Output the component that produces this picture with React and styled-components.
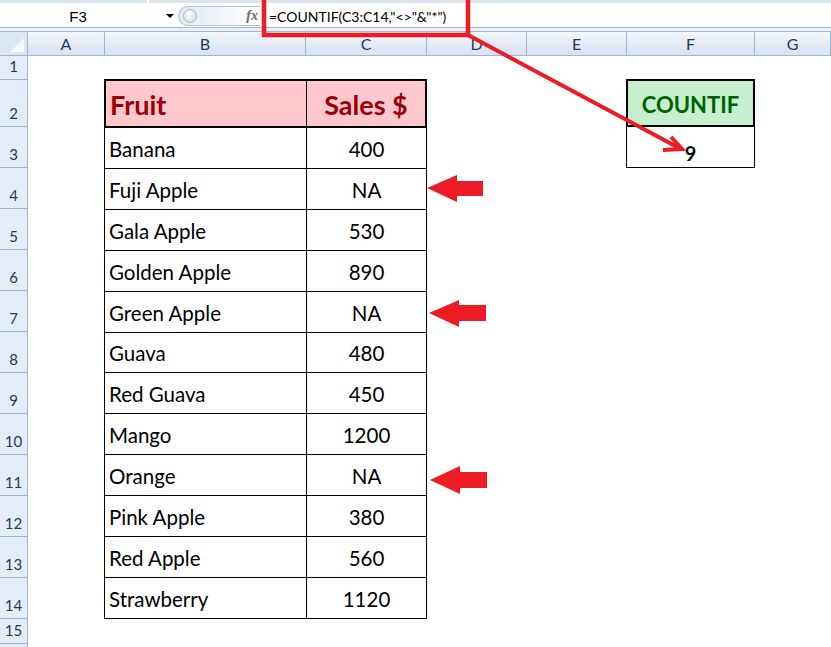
import React from "react";
import styled, { createGlobalStyle } from "styled-components";

const GlobalStyle = createGlobalStyle`
  html, body {
    margin: 0;
    padding: 0;
    background: #ffffff;
    overflow: hidden;
  }
  * {
    box-sizing: border-box;
  }
`;

const columns = ["A", "B", "C", "D", "E", "F", "G"];

const fruits = [
  ["Banana", "400"],
  ["Fuji Apple", "NA"],
  ["Gala Apple", "530"],
  ["Golden Apple", "890"],
  ["Green Apple", "NA"],
  ["Guava", "480"],
  ["Red Guava", "450"],
  ["Mango", "1200"],
  ["Orange", "NA"],
  ["Pink Apple", "380"],
  ["Red Apple", "560"],
  ["Strawberry", "1120"],
];

// row 16 is only a sliver at the bottom edge, so it gets no label
const rowLabels = Array.from({ length: 16 }, (_, i) => (i < 15 ? i + 1 : ""));

export default function App() {
  return (
    <Page>
      <GlobalStyle />
      <TopStrip />
      <FormulaBar>
        <NameBox>
          <span>F3</span>
          <DropArrow />
        </NameBox>
        <Splitter>
          <Knob />
          <Fx>fx</Fx>
        </Splitter>
        <FormulaText>=COUNTIF(C3:C14,"&lt;&gt;"&amp;"*")</FormulaText>
      </FormulaBar>
      <BarGap />

      <Sheet>
        <Corner>
          <CornerTriangle />
        </Corner>
        {columns.map((c) => (
          <ColHeader key={c}>{c}</ColHeader>
        ))}

        {rowLabels.map((n, i) => (
          <RowHeader key={i} style={{ gridRow: i + 2 }}>
            {n}
          </RowHeader>
        ))}

        <DataTable>
          <HeadRow $bg="#ffc7ce" $color="#9c0006">
            <HeadCell $align="left">Fruit</HeadCell>
            <HeadCell $align="center">Sales $</HeadCell>
          </HeadRow>
          {fruits.map(([name, sales]) => (
            <BodyRow key={name}>
              <Cell $align="left">{name}</Cell>
              <Cell $align="center">{sales}</Cell>
            </BodyRow>
          ))}
        </DataTable>

        <ResultBox>
          <ResultHead>COUNTIF</ResultHead>
          <ResultValue>9</ResultValue>
        </ResultBox>
      </Sheet>

      <Overlay width="831" height="647" viewBox="0 0 831 647">
        <rect
          x="264"
          y="-4"
          width="204"
          height="39"
          fill="none"
          stroke="#ed1c24"
          strokeWidth="4.5"
        />
        <line x1="468" y1="35" x2="681" y2="149" stroke="#ed1c24" strokeWidth="4" />
        <polyline
          points="671,137 682,149 663,150"
          fill="none"
          stroke="#ed1c24"
          strokeWidth="4"
          strokeLinejoin="miter"
        />
        <polygon
          points="427,188 457,175 457,181 483,181 483,196 457,196 457,202"
          fill="#ed1c24"
        />
        <polygon
          points="429,313 459,300 459,305 486,305 486,321 459,321 459,327"
          fill="#ed1c24"
        />
        <polygon
          points="430,480 460,466 460,472 487,472 487,488 460,488 460,494"
          fill="#ed1c24"
        />
      </Overlay>
    </Page>
  );
}

const Page = styled.div`
  position: relative;
  width: 831px;
  height: 647px;
  overflow: hidden;
  background: #ffffff;
`;

const TopStrip = styled.div`
  height: 3px;
  background: linear-gradient(to right, #dbe5f2 0 147px, #ffffff 147px 149px, #dbe5f2 149px);
`;

const FormulaBar = styled.div`
  height: 25px;
  display: flex;
  align-items: center;
  padding-top: 2px;
  background: #ffffff;
  border-bottom: 1px solid #a7b9d0;
`;

const NameBox = styled.div`
  width: 178px;
  height: 100%;
  display: flex;
  align-items: center;
  font-family: "Liberation Sans", Arial, sans-serif;
  font-size: 15px;
  color: #000;

  span {
    width: 156px;
    text-align: center;
  }
`;

const DropArrow = styled.div`
  width: 0;
  height: 0;
  margin-left: 10px;
  border-left: 4px solid transparent;
  border-right: 4px solid transparent;
  border-top: 4px solid #000;
`;

const Splitter = styled.div`
  width: 82px;
  height: 20px;
  display: flex;
  align-items: center;
  justify-content: space-between;
  padding: 0 2px 0 4px;
  border: 1px solid #b3c3d8;
  border-right: none;
  border-radius: 10px 0 0 10px;
  background: linear-gradient(to right, #e2e9f3, #f4f7fb 60%, #ffffff);
`;

const Knob = styled.div`
  width: 14px;
  height: 14px;
  border-radius: 50%;
  border: 1px solid #a9b8cc;
  background: radial-gradient(circle at 40% 35%, #ffffff, #c9d3e0);
`;

const Fx = styled.span`
  font-family: "Liberation Serif", "Times New Roman", serif;
  font-style: italic;
  font-weight: bold;
  font-size: 14px;
  color: #6b6b6b;
`;

const FormulaText = styled.div`
  margin-left: 9px;
  font-family: Lato, "Liberation Sans", sans-serif;
  font-size: 14px;
  color: #000;
`;

const BarGap = styled.div`
  height: 4px;
  background: #e7eef7;
  border-bottom: 1px solid #9eb6ce;
`;

const Sheet = styled.div`
  display: grid;
  grid-template-columns: 28px 77px 201px 121px 100px 100px 128px 1fr;
  grid-template-rows: 24px 24px 47px repeat(12, 41px) 25px 24px;
`;

const Corner = styled.div`
  grid-row: 1;
  grid-column: 1;
  position: relative;
  background: #dce6f3;
  border-right: 1px solid #9eb6ce;
  border-bottom: 1px solid #9eb6ce;
`;

const CornerTriangle = styled.div`
  position: absolute;
  right: 3px;
  bottom: 3px;
  width: 0;
  height: 0;
  border-left: 14px solid transparent;
  border-bottom: 14px solid #f4f7fb;
`;

const ColHeader = styled.div`
  grid-row: 1;
  display: flex;
  align-items: center;
  justify-content: center;
  background: linear-gradient(#f5f8fc, #e3eaf4 55%, #d9e3ef);
  border-right: 1px solid #9eb6ce;
  border-bottom: 1px solid #9eb6ce;
  font-family: Lato, "Liberation Sans", sans-serif;
  font-size: 16px;
  color: #1f3a5c;
`;

const RowHeader = styled.div`
  grid-column: 1;
  display: flex;
  align-items: flex-end;
  justify-content: center;
  padding-bottom: 4px;
  background: #e4ecf7;
  border-right: 1px solid #9eb6ce;
  border-bottom: 1px solid #9eb6ce;
  font-family: Lato, "Liberation Sans", sans-serif;
  font-size: 15px;
  color: #1f3a5c;
`;

const DataTable = styled.div`
  grid-column: 3 / 5;
  grid-row: 3 / 16;
  margin: -1px 0 0 -1px;
  display: flex;
  flex-direction: column;
  font-family: Lato, "Liberation Sans", sans-serif;
`;

const HeadRow = styled.div`
  display: grid;
  grid-template-columns: 201px 1fr;
  height: 49px;
  border: 2px solid #000;
  background: ${(p) => p.$bg};
  color: ${(p) => p.$color};
`;

const HeadCell = styled.div`
  display: flex;
  align-items: center;
  justify-content: ${(p) => (p.$align === "left" ? "flex-start" : "center")};
  padding: 2px 0 0 ${(p) => (p.$align === "left" ? "4px" : "0")};
  font-size: 27px;
  font-weight: bold;

  &:first-child {
    border-right: 1px solid #000;
  }
`;

const BodyRow = styled.div`
  display: grid;
  grid-template-columns: 202px 1fr;
  height: 41px;
  border: 1px solid #000;
  border-top: none;
`;

const Cell = styled.div`
  display: flex;
  align-items: center;
  justify-content: ${(p) => (p.$align === "left" ? "flex-start" : "center")};
  padding: 2px 0 0 ${(p) => (p.$align === "left" ? "4px" : "0")};
  font-size: 20.5px;
  color: #000;

  &:first-child {
    border-right: 1px solid #000;
  }
`;

const ResultBox = styled.div`
  grid-column: 7;
  grid-row: 3 / 5;
  margin: -1px 0 0 -1px;
  display: flex;
  flex-direction: column;
  font-family: Lato, "Liberation Sans", sans-serif;
`;

const ResultHead = styled.div`
  height: 49px;
  display: flex;
  align-items: center;
  justify-content: center;
  padding-top: 2px;
  border: 2px solid #000;
  background: #c6efce;
  color: #006100;
  font-size: 22px;
  font-weight: bold;
`;

const ResultValue = styled.div`
  height: 41px;
  display: flex;
  align-items: center;
  justify-content: center;
  padding-top: 12px;
  border: 1px solid #000;
  border-top: none;
  font-size: 20px;
  font-weight: bold;
  color: #000;
`;

const Overlay = styled.svg`
  position: absolute;
  left: 0;
  top: 0;
  pointer-events: none;
`;
